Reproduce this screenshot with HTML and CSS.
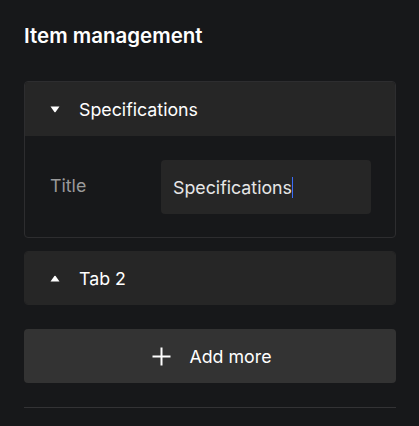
FILE: index.html
```html
<!DOCTYPE html>
<html>
<head>
<meta charset="utf-8">
<link rel="stylesheet" href="styles.css">
</head>
<body>
<div class="panel">
  <h2 class="panel-title">Item management</h2>
  <div class="card">
    <div class="card-header">
      <svg class="arrow" width="10" height="7" viewBox="0 0 10 7"><path d="M0.5 0.5 H9.5 L5.6 6 Q5 6.6 4.4 6 Z" fill="#fff"/></svg>
      <span>Specifications</span>
    </div>
    <div class="card-body">
      <label class="field-label">Title</label>
      <div class="field-input"><span>Specifications</span><span class="caret"></span></div>
    </div>
  </div>
  <div class="card collapsed">
    <div class="card-header">
      <svg class="arrow" width="10" height="7" viewBox="0 0 10 7"><path d="M0.5 6.5 H9.5 L5.6 1 Q5 0.4 4.4 1 Z" fill="#fff"/></svg>
      <span>Tab 2</span>
    </div>
  </div>
  <button class="add-btn">
    <svg width="19" height="19" viewBox="0 0 19 19"><path d="M9.5 0.5 V18.5 M0.5 9.5 H18.5" stroke="#fff" stroke-width="2" fill="none"/></svg>
    <span>Add more</span>
  </button>
  <div class="divider"></div>
</div>
</body>
</html>
```
FILE: styles.css
```css
html, body {
  margin: 0;
  background: #17181a;
  font-family: Inter, "Noto Sans", sans-serif;
  color: #fff;
}
.panel {
  padding: 24px 23px 0 24px;
  display: flex;
  flex-direction: column;
}
.panel-title {
  margin: 0;
  font-size: 20.5px;
  font-weight: 600;
  line-height: 24px;
  height: 24px;
  margin-bottom: 33px;
}
.card {
  border: 1px solid #2d2d2f;
  border-radius: 4px;
  overflow: hidden;
}
.card-header {
  height: 54px;
  background: #262626;
  display: flex;
  align-items: center;
  padding-left: 25px;
  gap: 19px;
  font-size: 17.8px;
}
.card.collapsed {
  margin-top: 13px;
  border-color: #262626;
}
.card.collapsed .card-header {
  height: 52px;
}
.card-body {
  display: grid;
  grid-template-columns: 111px 1fr;
  align-items: center;
  padding: 24px 24px 23px 25px;
}
.field-label {
  color: #9a9a9a;
  font-size: 17.8px;
  margin-top: -4px;
}
.field-input {
  height: 54px;
  background: #262626;
  border-radius: 4px;
  display: flex;
  align-items: center;
  padding-left: 12px;
  font-size: 17.8px;
  color: #e6e6e6;
}
.caret {
  width: 1px;
  height: 21px;
  background: #3b6cf6;
  margin-left: 0px;
}
.add-btn {
  margin-top: 24px;
  height: 54px;
  border: none;
  border-radius: 4px;
  background: #333333;
  color: #fff;
  font-family: inherit;
  font-size: 17.8px;
  display: flex;
  align-items: center;
  justify-content: center;
  gap: 18px;
  padding: 0 0 0 4px;
}
.divider {
  margin-top: 24px;
  height: 1px;
  background: #333335;
}
```
